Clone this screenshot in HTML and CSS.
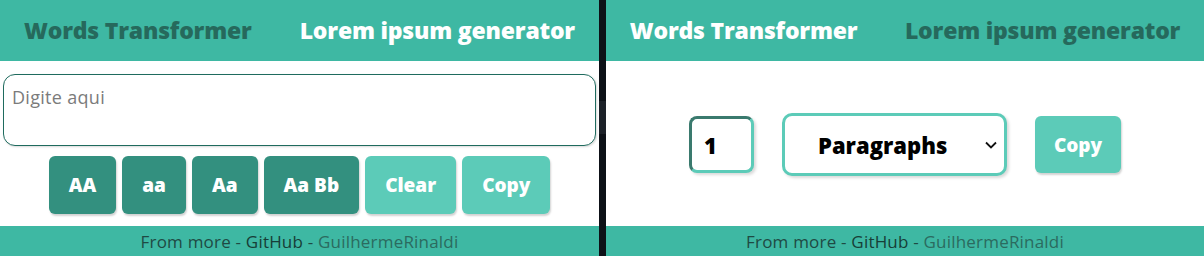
FILE: index.html
```html
<!DOCTYPE html>
<html lang="pt-br">
<head>
    <meta charset="UTF-8">
    <meta name="viewport" content="width=device-width, initial-scale=1.0">
    <title>Words Transformer</title>
    <link rel="stylesheet" href="styles.css">
</head>
<body>
    <div class="screen">
        <div class="janela">
            <header class="topo">
                <a class="menu ativo">Words Transformer</a>
                <a class="menu">Lorem ipsum generator</a>
            </header>
            <main class="transformer">
                <textarea class="texto" placeholder="Digite aqui"></textarea>
                <div class="acoes">
                    <button class="btn escuro">AA</button>
                    <button class="btn escuro">aa</button>
                    <button class="btn escuro">Aa</button>
                    <button class="btn escuro">Aa Bb</button>
                    <button class="btn claro">Clear</button>
                    <button class="btn claro">Copy</button>
                </div>
            </main>
            <footer class="rodape">From more - <a class="git">GitHub</a> - <a class="autor">GuilhermeRinaldi</a></footer>
        </div>

        <div class="divisor">
            <div class="divisor-alca"></div>
        </div>

        <div class="janela">
            <header class="topo">
                <a class="menu">Words Transformer</a>
                <a class="menu ativo">Lorem ipsum generator</a>
            </header>
            <main class="lorem">
                <input type="text" class="qtd" value="1">
                <div class="caixa-select">
                    <select class="tipo">
                        <option>Paragraphs</option>
                        <option>Words</option>
                    </select>
                    <svg class="seta" width="12" height="8" viewBox="0 0 12 8"><path d="M1 1.5 L6 6.5 L11 1.5" fill="none" stroke="#111" stroke-width="1.8"/></svg>
                </div>
                <button class="btn claro">Copy</button>
            </main>
            <footer class="rodape">From more - <a class="git">GitHub</a> - <a class="autor">GuilhermeRinaldi</a></footer>
        </div>
    </div>
</body>
</html>
```

FILE: styles.css
```css
* {
    box-sizing: border-box;
}

body {
    margin: 0;
    font-family: "Open Sans", "Noto Sans", sans-serif;
    background: #fff;
}

.screen {
    display: flex;
    height: 256px;
}

.janela {
    width: 599px;
    display: flex;
    flex-direction: column;
}

.janela:last-child {
    width: 598px;
}

.divisor {
    width: 7px;
    background: #0d1117;
    padding-top: 101px;
}

.divisor-alca {
    height: 33px;
    background: #1c2128;
}

.topo {
    height: 61px;
    background: #3eb8a3;
    display: flex;
    align-items: center;
    justify-content: space-around;
    padding-bottom: 1px;
}

.menu {
    font-size: 23px;
    font-weight: 800;
    color: #fff;
    letter-spacing: -0.2px;
}

.menu.ativo {
    color: #26695c;
}

.transformer {
    flex: 1;
    padding: 13px 3px 0;
}

.texto {
    display: block;
    width: 100%;
    height: 72px;
    border: 1px solid #1f6b5e;
    border-radius: 12px;
    padding: 10px 8px;
    font-family: "Open Sans", sans-serif;
    font-size: 18px;
    letter-spacing: 0.3px;
    resize: none;
    box-shadow: 1px 1px 2px rgba(0,0,0,0.15);
}

.texto::placeholder {
    color: #7b7b7b;
}

.acoes {
    display: flex;
    justify-content: center;
    gap: 6px;
    margin-top: 10px;
}

.btn {
    height: 58px;
    padding: 0 20px;
    border: none;
    border-radius: 6px;
    color: #fff;
    font-family: "Open Sans", sans-serif;
    font-size: 19px;
    font-weight: 800;
    box-shadow: 1px 2px 2px rgba(0,0,0,0.18);
}

.escuro {
    background: #33907f;
}

.claro {
    background: #5ccbb8;
}

.rodape {
    height: 30px;
    background: #3eb8a3;
    display: flex;
    align-items: center;
    justify-content: center;
    font-size: 17px;
    letter-spacing: 0.2px;
    color: #1e4a43;
    white-space: pre;
}

.git {
    color: #173e37;
}

.autor {
    color: #2b6b5f;
}

.lorem {
    flex: 1;
    display: flex;
    align-items: center;
    justify-content: center;
    gap: 28px;
    padding-top: 2px;
}

.qtd {
    width: 65px;
    height: 57px;
    border: 3px solid;
    border-color: #3a7a6e #5ccbb8 #5ccbb8 #3a7a6e;
    border-radius: 8px;
    padding: 0 12px;
    font-family: "Open Sans", sans-serif;
    font-size: 22px;
    font-weight: 800;
    color: #000;
    box-shadow: 2px 2px 3px rgba(0,0,0,0.15);
}

.lorem .btn {
    height: 57px;
    width: 86px;
    padding: 0;
}

.caixa-select {
    position: relative;
}

.tipo {
    appearance: none;
    width: 225px;
    height: 63px;
    border: 3px solid #5ccbb8;
    border-radius: 10px;
    background: #fff;
    padding: 0 0 0 33px;
    font-family: "Open Sans", sans-serif;
    font-size: 22px;
    font-weight: 800;
    color: #000;
    box-shadow: 2px 2px 3px rgba(0,0,0,0.15);
}

.seta {
    position: absolute;
    right: 10px;
    top: 28px;
}
```
